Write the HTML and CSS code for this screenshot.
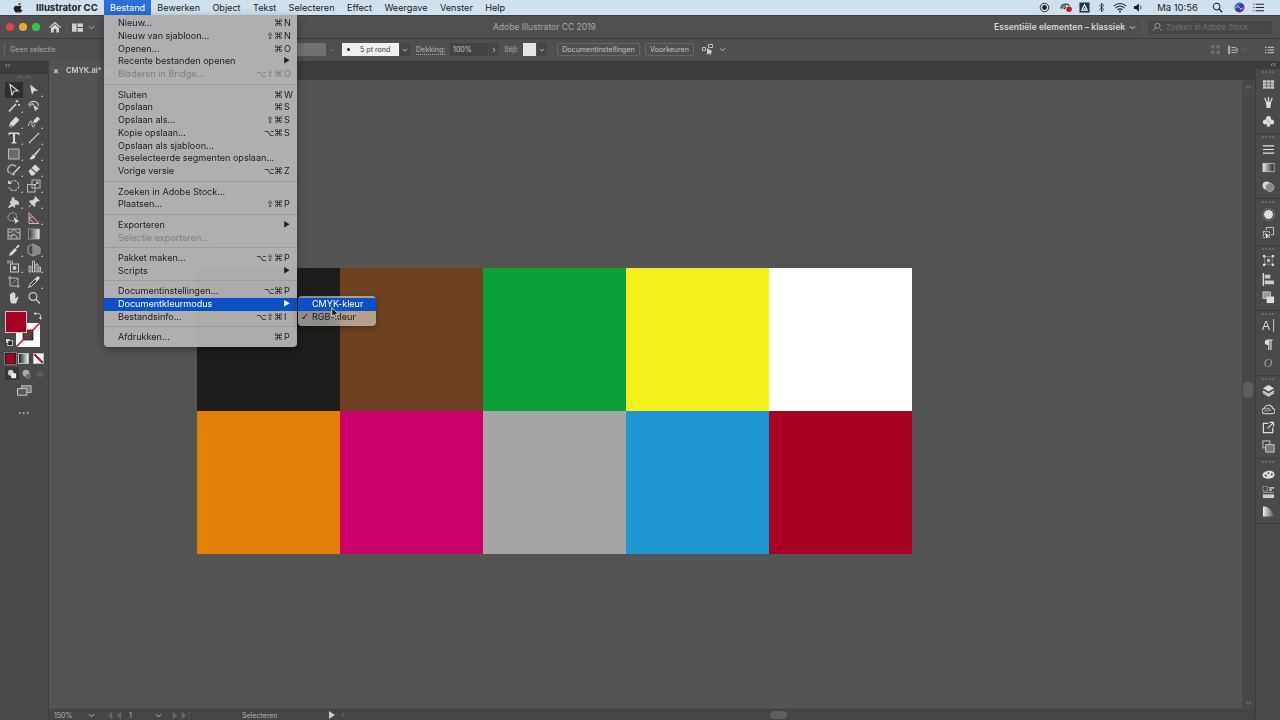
FILE: index.html
```html
<!DOCTYPE html>
<html lang="nl">
<head>
    <meta charset="UTF-8">
    <title>Adobe Illustrator CC 2019</title>
    <link rel="stylesheet" href="styles.css">
</head>
<body>
<div class="app">

    <!-- macOS menu bar -->
    <div class="menubar">
        <svg class="apple" viewBox="0 0 16 16"><path d="M11.2 1c.1 1-.3 1.900-.9 2.600-.6.700-1.500 1.200-2.400 1.100-.1-.9.300-1.900.9-2.500C9.400 1.500 10.400 1.100 11.200 1zM13.800 11.500c-.4.900-.6 1.300-1.100 2-.7 1-1.500 2-2.600 2-1 0-1.200-.6-2.500-.6s-1.600.6-2.500.6c-1.100 0-1.900-1-2.600-2C1 11.200.8 8.400 1.700 7c.7-1 1.700-1.600 2.800-1.600s1.800.6 2.700.6 1.400-.6 2.700-.6c1 0 2 .5 2.700 1.400-2.400 1.300-2 4.800 1.200 4.700z"/></svg>
        <span class="app-name">Illustrator CC</span>
        <span class="menu-item open">Bestand</span>
        <span class="menu-item">Bewerken</span>
        <span class="menu-item">Object</span>
        <span class="menu-item">Tekst</span>
        <span class="menu-item">Selecteren</span>
        <span class="menu-item">Effect</span>
        <span class="menu-item">Weergave</span>
        <span class="menu-item">Venster</span>
        <span class="menu-item">Help</span>
        <div class="status-icons">
            <svg viewBox="0 0 12 12"><circle cx="6" cy="6" r="4.700" fill="none" stroke="#222" stroke-width="1"/><circle cx="6" cy="6" r="2.600" fill="#222"/></svg>
            <svg class="wide st-cloud" viewBox="0 0 16 12"><path d="M2 7c0-3 3-5 6-5 1.500 0 3 .6 4 2M4 7.500c0-2 2-3.500 4-3.500M6 8c0-1 1-2 2-2" fill="none" stroke="#222" stroke-width="1.300"/><circle cx="11.500" cy="8" r="3.200" fill="#c4121a"/></svg>
            <svg viewBox="0 0 12 12"><rect x=".5" y=".5" width="11" height="11" fill="#1d3350"/><path d="M3 9l3-6 3 6zM5 7.500h2" fill="none" stroke="#fff" stroke-width="1.200"/></svg>
            <svg viewBox="0 0 12 12"><path d="M3.500 3.200L8.500 8 6 10.800V1.200L8.500 4 3.500 8.800" fill="none" stroke="#222" stroke-width=".9"/></svg>
            <svg class="wide" viewBox="0 0 16 12"><path d="M1 4.500c4-4 10-4 14 0M3 6.700c3-2.800 7-2.800 10 0M5.200 8.800c1.600-1.400 4-1.400 5.600 0" fill="none" stroke="#222" stroke-width="1.200"/><circle cx="8" cy="10.500" r="1.100" fill="#222"/></svg>
            <svg viewBox="0 0 12 12"><path d="M1 4.300h2.200L6.500 1.500v9L3.200 7.700H1z" fill="#222"/><path d="M8 4c.8.800.8 3.200 0 4" fill="none" stroke="#222"/></svg>
            <span class="clock">Ma 10:56</span>
            <svg class="st-search" viewBox="0 0 12 12"><circle cx="5" cy="5" r="3.600" fill="none" stroke="#222" stroke-width="1.100"/><path d="M7.600 7.600l3.600 3.600" stroke="#222" stroke-width="1.300"/></svg>
            <svg class="st-siri" viewBox="0 0 12 12"><defs><linearGradient id="siri" x1="0" y1="0" x2="1" y2="1"><stop offset="0" stop-color="#41a5e8"/><stop offset=".55" stop-color="#3a2f9a"/><stop offset="1" stop-color="#c0396e"/></linearGradient></defs><circle cx="6" cy="6" r="5.500" fill="url(#siri)"/><path d="M2 6.500c1.500-2.500 2.500-2 4 0s2.500 1 4-.5" fill="none" stroke="#dfe8ff" stroke-width="1"/></svg>
            <svg class="st-list" viewBox="0 0 12 12"><path d="M3 2.500h9M3 6h9M3 9.500h9" stroke="#222" stroke-width="1.100"/><path d="M.5 2.500h1M.5 6h1M.5 9.500h1" stroke="#222" stroke-width="1.200"/></svg>
        </div>
    </div>

    <!-- Illustrator title bar -->
    <div class="titlebar">
        <span class="light red"></span>
        <span class="light yellow"></span>
        <span class="light green"></span>
        <svg class="home" viewBox="0 0 12 12"><path d="M0 6.200L6 .8l6 5.400-.8.800L6 2.400.8 7zM2 7l4-3.500L10 7v4.500H7.300V8H4.700v3.500H2z" fill="#d4d4d4"/></svg>
        <span class="divider"></span>
        <svg class="layout" viewBox="0 0 12 9"><path d="M0 0h5v9H0zM6 0h6v4H6zM6 5h6v4H6z" fill="#cfcfcf"/></svg>
        <svg class="chev" viewBox="0 0 8 5"><path d="M1 1l3 3 3-3" fill="none" stroke="#bbb" stroke-width="1.100"/></svg>
        <span class="doc-title">Adobe Illustrator CC 2019</span>
        <span class="workspace">Essentiële elementen – klassiek</span>
        <svg class="chev" viewBox="0 0 8 5"><path d="M1 1l3 3 3-3" fill="none" stroke="#ddd" stroke-width="1.100"/></svg>
        <span class="divider right"></span>
        <div class="stock-search">
            <svg viewBox="0 0 14 12"><circle cx="7" cy="4.500" r="3.300" fill="none" stroke="#aaa"/><path d="M4.600 7L1.500 10.500" stroke="#aaa" stroke-width="1.200"/><path d="M10 9h3l-1.500 1.500z" fill="#aaa"/></svg>
            <span>Zoeken in Adobe Stock</span>
        </div>
    </div>

    <!-- control bar -->
    <div class="controlbar">
        <span class="grip"></span>
        <span class="no-selection">Geen selectie</span>
        <span class="stroke-field"></span>
        <span class="chev-box dim"><svg viewBox="0 0 8 5"><path d="M1 1l3 3 3-3" fill="none" stroke="#777" stroke-width="1.100"/></svg></span>
        <span class="brush-field"><i class="brush-dot"></i>5 pt rond</span>
        <span class="chev-box"><svg viewBox="0 0 8 5"><path d="M1 1l3 3 3-3" fill="none" stroke="#ccc" stroke-width="1.100"/></svg></span>
        <span class="ctl-label link">Dekking:</span>
        <span class="opacity-field">100%</span>
        <span class="chev-box arrow"><svg viewBox="0 0 5 8"><path d="M1 1l3 3-3 3" fill="none" stroke="#ccc" stroke-width="1.100"/></svg></span>
        <span class="ctl-label style-label">Stijl:</span>
        <span class="style-swatch"></span>
        <span class="chev-box"><svg viewBox="0 0 8 5"><path d="M1 1l3 3 3-3" fill="none" stroke="#ccc" stroke-width="1.100"/></svg></span>
        <span class="ctl-btn doc-btn">Documentinstellingen</span>
        <span class="ctl-btn pref-btn">Voorkeuren</span>
        <svg class="align-icon" viewBox="0 0 12 11"><path d="M.5 3.500h3v3h-3zM6.500.5h4v3h-4z" fill="none" stroke="#bbb"/><path d="M5 4v7l2-1.800L8.500 11 10 7z" fill="#ccc"/></svg>
        <svg class="chev" viewBox="0 0 8 5"><path d="M1 1l3 3 3-3" fill="none" stroke="#bbb" stroke-width="1.100"/></svg>
        <div class="ctl-end">
            <svg class="dots-grid" viewBox="0 0 10 10"><path d="M0 0h4v4H0zM6 0h4v4H6zM0 6h4v4H0zM6 6h4v4H6z" fill="#6c6c6c"/></svg>
            <svg class="align-end" viewBox="0 0 14 10"><path d="M0 0h2.500v10H0z" fill="#aaa"/><path d="M4 2h4a3 3 0 010 6H4M4 5h6" fill="none" stroke="#bbb" stroke-width="1.100"/></svg>
            <svg class="chev" viewBox="0 0 8 5"><path d="M1 1l3 3 3-3" fill="none" stroke="#6c6c6c" stroke-width="1.100"/></svg>
            <svg class="list-icon" viewBox="0 0 10 8"><path d="M3 1h7M3 4h7M3 7h7" stroke="#ccc" stroke-width="1.100"/><path d="M0 1h1.500M0 4h1.500M0 7h1.500" stroke="#ccc" stroke-width="1.300"/></svg>
        </div>
    </div>

    <div class="workspace-area">

        <!-- tools -->
        <aside class="toolbar">
            <div class="panel-head">‹‹</div>
            <div class="panel-grip"></div>
            <div class="tools">
                <span class="tool selected"><svg viewBox="0 0 14 14"><path d="M3 1.500l8 6.200-4 .3-2 4z" fill="none" stroke="#ddd" stroke-width="1.100"/></svg></span>
                <span class="tool more"><svg viewBox="0 0 14 14"><path d="M3 1.500l8 6.200-4 .3-2 4z" fill="#d8d8d8"/></svg></span>
                <span class="tool more"><svg viewBox="0 0 14 14"><path d="M2 12.500L9 5" stroke="#ddd" stroke-width="1.500"/><path d="M10 1v2.500M8.500 2.300h3M12 5v2M11 6h2" stroke="#ddd"/></svg></span>
                <span class="tool"><svg viewBox="0 0 14 14"><path d="M1.500 6C2 3 6 1.500 9 3c2 1 2.500 3 1.800 4.500M3 8C2 5.500 5 4 7 5.500" fill="none" stroke="#ccc" stroke-width="1.100"/><path d="M6 5.500l6 4.500-2.500.2-1 2.300z" fill="#ddd"/></svg></span>
                <span class="tool more"><svg viewBox="0 0 14 14"><path d="M2 13l1-5 4.500-5L11 6.500 6.500 11zM7.500 3L9 1.500 12.500 5 11 6.500" fill="#d8d8d8"/><path d="M2 13l3-3" stroke="#444"/></svg></span>
                <span class="tool more"><svg viewBox="0 0 14 14"><path d="M1 11c2-3 1-5 3-5s0 6 2 6c1.500 0 1-2 2-3" fill="none" stroke="#ccc"/><path d="M6 8l1-3 3.500-3.500L13 4 9.500 7.500z" fill="#d8d8d8"/></svg></span>
                <span class="tool more"><svg viewBox="0 0 14 14"><path d="M1.500 1.500h11v2.800h-1L11 3H8v8l1.500.5v1h-5v-1L6 11V3H3l-.5 1.300h-1z" fill="#d8d8d8"/></svg></span>
                <span class="tool more"><svg viewBox="0 0 14 14"><path d="M2 12L12 2" stroke="#ccc" stroke-width="1.100"/></svg></span>
                <span class="tool more"><svg viewBox="0 0 14 14"><rect x="1.500" y="2" width="10.500" height="10" fill="#6a6a6a" stroke="#bbb" stroke-width="1"/></svg></span>
                <span class="tool more"><svg viewBox="0 0 14 14"><path d="M13 1L7 7l1.500 1.500L13.500 2zM6.500 7.500C4 8 5 10.500 2 12c3 1 6 0 6.500-3z" fill="#d8d8d8"/></svg></span>
                <span class="tool more"><svg viewBox="0 0 14 14"><path d="M9 3.500A4.500 4.500 0 102 10" fill="none" stroke="#bbb" stroke-width="1.300"/><path d="M5 11l7.500-8 1 1L6 12z" fill="#d8d8d8"/><path d="M3 8.500c0 3 3 4 5 3" fill="none" stroke="#bbb"/></svg></span>
                <span class="tool more"><svg viewBox="0 0 14 14"><path d="M1.500 8L8 1.500 13 6l-6.500 6.500H4z" fill="#d8d8d8"/><path d="M4 5.500L9.500 10" stroke="#555" stroke-width="1.200"/></svg></span>
                <span class="tool more"><svg viewBox="0 0 14 14"><path d="M3 3.500A5 5 0 112 8" fill="none" stroke="#aaa" stroke-width="1.300" stroke-dasharray="3 1"/><path d="M1 1v4h4z" fill="#ccc"/></svg></span>
                <span class="tool more"><svg viewBox="0 0 14 14"><rect x=".5" y="5.500" width="7.500" height="7.500" fill="none" stroke="#bbb"/><rect x="5" y="1" width="8" height="8" fill="none" stroke="#bbb"/><path d="M7 7l4-4M9 3h2v2" fill="none" stroke="#ddd"/></svg></span>
                <span class="tool more"><svg viewBox="0 0 14 14"><path d="M1 13c1-3 2-3 3-4-2-1-1-3 .5-3.500C4 3 6 1 7.500 2.500 6.500 4 8 5 10 5.500c2 .5 3 3 1 5-.5-1-2-1.500-3-.5.500 1 0 2-.5 3-1-1-2-2-3-1.500-.5.500-1 1-3.500 1.500z" fill="#cfcfcf"/></svg></span>
                <span class="tool more"><svg viewBox="0 0 14 14"><path d="M8 1l5 5-1.200.6-1-.6-2.600 2.600.3 2L7.300 12 4.800 9.300 2 12.500l-.6-.6L4.500 9 2 6.500l1.400-1.200 2 .3L8 3l-.6-1z" fill="#d8d8d8"/></svg></span>
                <span class="tool"><svg viewBox="0 0 14 14"><path d="M1 6c0-3 3-4.500 5.500-4 3 .5 4 3 3 5L7 10 3 9.500C2 9 1 8 1 6z" fill="none" stroke="#bbb" stroke-dasharray="2 1"/><path d="M6.500 6l6 4.500-2.700.2-1 2.500z" fill="#ddd"/></svg></span>
                <span class="tool more"><svg viewBox="0 0 14 14"><path d="M2 1.500v11h10z" fill="#7a4048"/><path d="M2 1.500v11h10zM2 7l5 5.500M2 7l4-1.500" fill="none" stroke="#bbb"/></svg></span>
                <span class="tool"><svg viewBox="0 0 14 14"><rect x="1" y="2" width="12" height="10" fill="#555" stroke="#bbb"/><path d="M1 5c3 1 5-1 6-3M1 9c4 0 5-2 7-1s2 3 2 4M7 2c1 2 3 4 6 4M4 12c0-3 1-5 3-5" fill="none" stroke="#ccc" stroke-width=".8"/></svg></span>
                <span class="tool"><svg viewBox="0 0 14 14"><defs><linearGradient id="toolgrad"><stop offset="0" stop-color="#333"/><stop offset="1" stop-color="#eee"/></linearGradient></defs><rect x="1.500" y="2" width="11" height="10" fill="url(#toolgrad)" stroke="#aaa" stroke-width=".7"/></svg></span>
                <span class="tool more"><svg viewBox="0 0 14 14"><path d="M2 13l1-3 5-5 2 2-5 5zM8.500 4.500L11 2c1-.8 2 .2 1.300 1.300L10 5.500z" fill="#d8d8d8"/></svg></span>
                <span class="tool more"><svg viewBox="0 0 14 14"><path d="M1 3.500L6 1l7 3.500v6L6 13l-5-3z" fill="none" stroke="#aaa"/><path d="M6 1v12" stroke="#aaa"/><path d="M6 1l7 3.500v6L6 13z" fill="#888"/></svg></span>
                <span class="tool more"><svg viewBox="0 0 14 14"><path d="M1 1.500v3M3 1.500v3M5 1.500l.5 3" stroke="#ccc"/><rect x="3.500" y="5" width="8" height="8" fill="none" stroke="#ccc"/><circle cx="7.500" cy="9" r="2" fill="#ccc"/></svg></span>
                <span class="tool more"><svg viewBox="0 0 14 14"><path d="M2 13V7h2v6zM5.500 13V2h2v11zM9 13V5h2v8zM12 13V8h1.500v5z" fill="none" stroke="#ccc" stroke-width=".9"/></svg></span>
                <span class="tool"><svg viewBox="0 0 14 14"><path d="M3 1v10h10" fill="none" stroke="#bbb"/><path d="M1 3h10v10" fill="none" stroke="#bbb"/><path d="M5 9l5-5" stroke="#888"/></svg></span>
                <span class="tool more"><svg viewBox="0 0 14 14"><path d="M1.500 12.500L3 9l5-5 2 2-5 5z" fill="none" stroke="#ccc"/><path d="M8 3.500L11 1l2 2-2.500 3z" fill="#d8d8d8"/></svg></span>
                <span class="tool"><svg viewBox="0 0 14 14"><path d="M3 7V3.500c0-1 1.300-1 1.300 0V6.500V2.200c0-1 1.400-1 1.400 0v4.300V1.800c0-1 1.400-1 1.400 0v4.700-3.800c0-1 1.300-1 1.300 0V8l1.500-1.800c1-.8 1.800 0 1.200 1L9 12.500H4.500C3.500 11.500 3 9 3 7z" fill="#d8d8d8"/></svg></span>
                <span class="tool"><svg viewBox="0 0 14 14"><circle cx="6" cy="5.500" r="3.900" fill="none" stroke="#ccc" stroke-width="1.200"/><path d="M9 8.500l4 4" stroke="#ccc" stroke-width="1.500"/></svg></span>
            </div>

            <div class="fill-stroke">
                <svg class="stroke-swatch" viewBox="0 0 24 24"><rect width="24" height="24" fill="#fff"/><rect x="7" y="7" width="10" height="10" fill="#444" stroke="#111" stroke-width=".7"/><path d="M0 24L24 0" stroke="#c8102e" stroke-width="1.500"/></svg>
                <span class="fill-swatch"></span>
                <svg class="swap" viewBox="0 0 12 12"><path d="M2 3.500h5.500c1.500 0 2.500 1 2.500 2.500v3" fill="none" stroke="#ddd" stroke-width="1.200"/><path d="M3.500 1L1 3.500 3.500 6zM7.500 8.500h5L10 11.500z" fill="#ddd"/></svg>
                <svg class="reset" viewBox="0 0 10 10"><rect x=".5" y=".5" width="6" height="6" fill="#ddd" stroke="#222"/><rect x="3.500" y="3.500" width="6" height="6" fill="#222" stroke="#ddd"/></svg>
            </div>

            <div class="mode-row">
                <span class="mode color"></span>
                <span class="mode gradient"></span>
                <span class="mode none"></span>
            </div>
            <div class="mode-row draw">
                <span class="draw-mode on"><svg viewBox="0 0 12 12"><circle cx="4.500" cy="4.500" r="3.500" fill="#ccc"/><rect x="5" y="5" width="6" height="6" rx="1" fill="#eee"/></svg></span>
                <span class="draw-mode"><svg viewBox="0 0 12 12"><circle cx="6" cy="5" r="4" fill="#aaa"/><rect x="6" y="6" width="5" height="5" rx="1" fill="#666" stroke="#aaa" stroke-width=".6"/></svg></span>
                <span class="draw-mode"><svg viewBox="0 0 12 12"><circle cx="6" cy="6" r="4" fill="#5c5c5c"/></svg></span>
            </div>
            <svg class="screen-mode" viewBox="0 0 16 11"><rect x="5" y=".5" width="10" height="7" fill="#777" stroke="#ccc"/><rect x=".5" y="3.500" width="10" height="7" fill="#5b5b5b" stroke="#ccc"/></svg>
            <div class="more-tools">•••</div>
        </aside>

        <main class="doc-area">
            <div class="tabs">
                <div class="tab"><span class="tab-x">×</span><span class="tab-name">CMYK.ai* @</span></div>
            </div>
            <div class="canvas-row">
                <div class="canvas">
                    <div class="artboard">
                        <span class="black"></span>
                        <span class="brown"></span>
                        <span class="green"></span>
                        <span class="yellow"></span>
                        <span class="white"></span>
                        <span class="orange"></span>
                        <span class="magenta"></span>
                        <span class="grey"></span>
                        <span class="blue"></span>
                        <span class="crimson"></span>
                    </div>
                </div>
                <div class="v-scroll">
                    <svg viewBox="0 0 8 5"><path d="M1 4l3-3 3 3" fill="none" stroke="#888"/></svg>
                    <span class="v-thumb"></span>
                    <svg viewBox="0 0 8 5"><path d="M1 1l3 3 3-3" fill="none" stroke="#888"/></svg>
                </div>
            </div>
            <div class="statusbar">
                <span class="zoom-val">150%</span>
                <svg class="chev" viewBox="0 0 8 5"><path d="M1 1l3 3 3-3" fill="none" stroke="#bbb" stroke-width="1.100"/></svg>
                <svg class="pager" viewBox="0 0 20 7"><path d="M1 0v7M7 0L3 3.500 7 7zM16 0l-4 3.500L16 7z" fill="#646464" stroke="#646464" stroke-width=".6"/></svg>
                <span class="page-val">1</span>
                <svg class="chev" viewBox="0 0 8 5"><path d="M1 1l3 3 3-3" fill="none" stroke="#bbb" stroke-width="1.100"/></svg>
                <svg class="pager next" viewBox="0 0 20 7"><path d="M2 0l4 3.500L2 7zM11 0l4 3.500L11 7zM18 0v7" fill="#646464" stroke="#646464" stroke-width=".6"/></svg>
                <span class="status-tool">Selecteren</span>
                <svg class="status-play" viewBox="0 0 6 8"><path d="M0 0l6 4-6 4z" fill="#ccc"/></svg>
                <svg class="status-left" viewBox="0 0 5 8"><path d="M4 1L1 4l3 3" fill="none" stroke="#888"/></svg>
                <span class="h-thumb"></span>
            </div>
        </main>

        <!-- docked panels -->
        <aside class="panels">
            <div class="panel-head right">‹‹</div>
            <div class="dock">
                <div class="panel-grip"></div>
                <svg viewBox="0 0 14 14"><rect x="1" y="2.500" width="12" height="9" fill="#ccc"/><path d="M1 5.500h12M1 8.500h12M5 2.500v9M9 2.500v9" stroke="#555" stroke-width=".8"/></svg>
                <svg viewBox="0 0 14 14"><path d="M4 6l1 7h4l1-7z" fill="#ddd"/><path d="M7 6V1M4.500 6L3 2M9.500 6L11 2" stroke="#ddd" stroke-width="1.400"/></svg>
                <svg viewBox="0 0 14 14"><circle cx="7" cy="3.700" r="2.700" fill="#ddd"/><circle cx="3.700" cy="7.500" r="2.700" fill="#ddd"/><circle cx="10.300" cy="7.500" r="2.700" fill="#ddd"/><path d="M6 7h2l1 5.500H5z" fill="#ddd"/></svg>
            </div>
            <div class="dock">
                <div class="panel-grip"></div>
                <svg viewBox="0 0 14 14"><path d="M1 3h12M1 7h12M1 11h12" stroke="#ddd" stroke-width="1.300"/></svg>
                <svg viewBox="0 0 14 14"><defs><linearGradient id="panelgrad"><stop offset="0" stop-color="#eee"/><stop offset="1" stop-color="#222"/></linearGradient></defs><rect x="1" y="2.500" width="12" height="9" fill="url(#panelgrad)" stroke="#ccc" stroke-width=".8"/></svg>
                <svg viewBox="0 0 14 14"><circle cx="5" cy="6" r="4.500" fill="#d8d8d8"/><circle cx="8.500" cy="8" r="4.500" fill="#888" stroke="#aaa" stroke-width=".8"/></svg>
            </div>
            <div class="dock">
                <div class="panel-grip"></div>
                <svg viewBox="0 0 14 14"><circle cx="7" cy="7" r="4.800" fill="#ddd"/><circle cx="7" cy="7" r="6.300" fill="none" stroke="#bbb" stroke-dasharray="1 1.200"/></svg>
                <svg viewBox="0 0 14 14"><path d="M4.500 4.500v-3h8v8h-3" fill="none" stroke="#ccc"/><rect x="1.500" y="6" width="6.500" height="6.500" fill="none" stroke="#ddd" stroke-dasharray="2 1"/><path d="M3 7l5 4-2.300.2-.8 2z" fill="#eee"/></svg>
            </div>
            <div class="dock">
                <div class="panel-grip"></div>
                <svg viewBox="0 0 14 14"><rect x="3" y="3" width="8" height="8" fill="none" stroke="#bbb" stroke-dasharray="1.500 1"/><path d="M1 1h2.500v2.500H1zM10.500 1H13v2.500h-2.500zM1 10.500h2.500V13H1zM10.500 10.500H13V13h-2.500z" fill="#ddd"/><path d="M5.500 5.500h3v3h-3z" fill="#ccc"/></svg>
                <svg viewBox="0 0 14 14"><path d="M1.500 0v14" stroke="#ddd" stroke-width="1.500"/><path d="M3 2h6v4H3zM3 8h10v4H3z" fill="#ccc"/></svg>
                <svg viewBox="0 0 14 14"><rect x="1" y="1" width="8" height="7" fill="#999" stroke="#ddd" stroke-width=".8"/><rect x="5" y="6" width="8" height="7" fill="#ddd"/></svg>
            </div>
            <div class="dock">
                <div class="panel-grip"></div>
                <svg viewBox="0 0 14 14"><text class="panel-glyph" x="0" y="12">A</text><path d="M12.500 0v14" stroke="#ddd" stroke-width=".9"/></svg>
                <svg viewBox="0 0 14 14"><path d="M6 1.500h5.500v1.300H10.300v10H9V2.800H8v10H6.700V7.500C3.500 7.500 2.800 5.500 3 4.500c.2-2 1.500-3 3-3z" fill="#ddd"/></svg>
                <svg viewBox="0 0 14 14"><text class="panel-glyph italic" x="2" y="11.500">O</text></svg>
            </div>
            <div class="dock">
                <div class="panel-grip"></div>
                <svg viewBox="0 0 14 14"><path d="M7 1l6 3.500L7 8 1 4.500z" fill="#ddd"/><path d="M1 7.500L7 11l6-3.500M1 9.500L7 13l6-3.500" fill="none" stroke="#ddd" stroke-width="1.300"/></svg>
                <svg viewBox="0 0 14 14"><path d="M3.500 11.500C1 11.500 0 10 0 8.500 0 7 1 6 2.500 6 3 3.500 5.500 2 8 2.500c2 .4 3.300 2 3.500 3.500 1.500.3 2.500 1.500 2.500 2.800 0 1.500-1.200 2.700-3 2.700z" fill="none" stroke="#ddd" stroke-width="1.100"/><path d="M3 9c1-3 3-4 5-3M5 9.500c1-2 3-2.500 5-1.500" fill="none" stroke="#ccc"/></svg>
                <svg viewBox="0 0 14 14"><path d="M7 2.500H1.500v10h10V7" fill="none" stroke="#ddd" stroke-width="1.300"/><path d="M6 8l6-6M8 1.500h4.500V6" fill="none" stroke="#ddd" stroke-width="1.300"/></svg>
                <svg viewBox="0 0 14 14"><rect x="1" y="1" width="7.500" height="7.500" fill="none" stroke="#ccc"/><rect x="4" y="5" width="9" height="8" fill="#777" stroke="#ccc"/></svg>
            </div>
            <div class="dock">
                <div class="panel-grip"></div>
                <svg viewBox="0 0 14 14"><path d="M6.500 3C10 2.500 13.500 4 13.500 7S10 11.500 7 11.500 .5 10.500.5 8C.5 5.500 3.500 3.500 6.500 3z" fill="#ddd"/><circle cx="4" cy="8" r="1.100" fill="#444"/><circle cx="7" cy="5.500" r="1" fill="#444"/><circle cx="10.500" cy="7" r="1" fill="#444"/></svg>
                <svg viewBox="0 0 14 14"><rect x="1" y=".5" width="5" height="5" fill="none" stroke="#ccc" stroke-dasharray="1 1"/><path d="M8 1h2.500v2H8zM11 1h2v2h-2zM8 3.500h2.500v2H8z" fill="#ccc"/><path d="M1 9h12v4H1z" fill="#ccc"/><path d="M1 7h12" stroke="#999"/></svg>
                <svg viewBox="0 0 14 14"><defs><linearGradient id="gloss"><stop offset="0" stop-color="#eee"/><stop offset="1" stop-color="#555"/></linearGradient></defs><path d="M1 1.500h2.500C8 2.500 11.500 7 13 12.500H1z" fill="url(#gloss)"/></svg>
            </div>
        </aside>
    </div>

    <!-- open Bestand menu -->
    <div class="file-menu">
        <div class="row">Nieuw...<span class="mods">⌘</span><span class="key">N</span></div>
        <div class="row">Nieuw van sjabloon...<span class="mods">⇧⌘</span><span class="key">N</span></div>
        <div class="row">Openen...<span class="mods">⌘</span><span class="key">O</span></div>
        <div class="row">Recente bestanden openen<span class="sub">▶</span></div>
        <div class="row off">Bladeren in Bridge...<span class="mods">⌥⇧⌘</span><span class="key">O</span></div>
        <div class="sep"></div>
        <div class="row">Sluiten<span class="mods">⌘</span><span class="key">W</span></div>
        <div class="row">Opslaan<span class="mods">⌘</span><span class="key">S</span></div>
        <div class="row">Opslaan als...<span class="mods">⇧⌘</span><span class="key">S</span></div>
        <div class="row">Kopie opslaan...<span class="mods">⌥⌘</span><span class="key">S</span></div>
        <div class="row">Opslaan als sjabloon...</div>
        <div class="row">Geselecteerde segmenten opslaan...</div>
        <div class="row">Vorige versie<span class="mods">⌥⌘</span><span class="key">Z</span></div>
        <div class="sep"></div>
        <div class="row">Zoeken in Adobe Stock...</div>
        <div class="row">Plaatsen...<span class="mods">⇧⌘</span><span class="key">P</span></div>
        <div class="sep"></div>
        <div class="row">Exporteren<span class="sub">▶</span></div>
        <div class="row off">Selectie exporteren...</div>
        <div class="sep"></div>
        <div class="row">Pakket maken...<span class="mods">⌥⇧⌘</span><span class="key">P</span></div>
        <div class="row">Scripts<span class="sub">▶</span></div>
        <div class="sep"></div>
        <div class="row">Documentinstellingen...<span class="mods">⌥⌘</span><span class="key">P</span></div>
        <div class="row active">Documentkleurmodus<span class="sub">▶</span></div>
        <div class="row">Bestandsinfo...<span class="mods">⌥⇧⌘</span><span class="key">I</span></div>
        <div class="sep"></div>
        <div class="row">Afdrukken...<span class="mods">⌘</span><span class="key">P</span></div>
    </div>

    <div class="color-menu">
        <div class="row active">CMYK-kleur</div>
        <div class="row"><span class="check">✓</span>RGB-kleur</div>
    </div>

    <svg class="cursor" viewBox="0 0 12 16"><path d="M1 1v12l3-2.800L6.200 15l2-.9L6 9.600h4z" fill="#111" stroke="#fff" stroke-width="1"/></svg>
</div>
</body>
</html>
```

FILE: styles.css
```css
* {
    margin: 0;
    padding: 0;
    box-sizing: border-box;
}

html, body {
    width: 1280px;
    height: 720px;
    overflow: hidden;
}

body {
    background: #545454;
    font-family: "Inter", "Liberation Sans", "DejaVu Sans", sans-serif;
}

svg {
    display: block;
    flex: none;
}

.app {
    position: relative;
    width: 1280px;
    height: 720px;
    display: flex;
    flex-direction: column;
    filter: blur(0.35px);
}

/* menu bar */
.menubar {
    height: 15px;
    flex: none;
    display: flex;
    align-items: center;
    padding-left: 13px;
    background: #cfe1ef;
    color: #222;
    font-size: 9.100px;
}

.apple {
    width: 11px;
    height: 11px;
    fill: #222;
    margin-right: 12px;
}

.app-name {
    font-size: 9.600px;
    font-weight: 700;
    width: 68px;
}

.menu-item {
    height: 15px;
    line-height: 15px;
    padding: 0 6.200px;
}

.menu-item.open {
    background: #2a6fdb;
    color: #fff;
    padding: 0 6px;
}

.status-icons {
    margin-left: auto;
    display: flex;
    align-items: center;
    padding-right: 16px;
}

.status-icons svg {
    width: 11px;
    height: 11px;
    margin-left: 6px;
}

.status-icons svg.wide {
    width: 14px;
}

.status-icons svg.st-cloud {
    margin-left: 9.500px;
}

.clock {
    margin: 0 14px 0 13px;
    font-size: 9.500px;
}

.status-icons svg.st-search {
    margin-left: 0;
}

.status-icons svg.st-siri {
    margin-left: 11px;
}

.status-icons svg.st-list {
    margin-left: 8px;
}

/* title bar */
.titlebar {
    height: 23px;
    flex: none;
    display: flex;
    align-items: center;
    background: #505050;
    border-top: 1px solid #3f3f3f;
    padding-left: 6px;
    font-size: 8.500px;
}

.light {
    width: 8px;
    height: 8px;
    border-radius: 50%;
    margin-right: 5px;
}

.light.red { background: #e8424a; }
.light.yellow { background: #eda92b; }
.light.green { background: #3fc24a; }

.home {
    width: 12px;
    height: 12px;
    margin-left: 4px;
}

.divider {
    width: 1px;
    height: 14px;
    background: #5e5e5e;
    margin: 0 5px;
}

.layout {
    width: 11px;
    height: 9px;
}

.chev {
    width: 7px;
    height: 5px;
    margin-left: 5px;
}

.doc-title {
    margin-left: 398px;
    width: 102px;
    color: #a9a9a9;
    white-space: nowrap;
}

.workspace {
    margin-left: 399px;
    color: #d8d8d8;
    font-weight: 600;
    letter-spacing: 0.05px;
    white-space: nowrap;
    width: 130px;
}

.divider.right {
    margin: 0 5px 0 6px;
}

.stock-search {
    width: 124px;
    height: 13px;
    display: flex;
    align-items: center;
    gap: 3px;
    padding-left: 3px;
    background: #474747;
    border: 1px solid #444;
    color: #757575;
    font-size: 7.500px;
    white-space: nowrap;
}

.stock-search svg {
    width: 11px;
    height: 10px;
}

/* control bar */
.controlbar {
    height: 23px;
    flex: none;
    display: flex;
    align-items: center;
    background: #4f4f4f;
    border-top: 1px solid #3c3c3c;
    padding: 0 0 1px 4px;
    font-size: 7.100px;
    color: #c4c4c4;
}

.grip {
    width: 2px;
    height: 13px;
    border-left: 1px dotted #777;
}

.no-selection {
    margin-left: 4px;
    width: 287px;
    color: #a8a8a8;
}

.stroke-field {
    width: 29px;
    height: 13px;
    background: #717171;
}

.chev-box {
    width: 10px;
    height: 13px;
    margin-left: 1px;
    display: flex;
    align-items: center;
    justify-content: center;
    background: #464646;
}

.chev-box svg {
    width: 6px;
    height: 4px;
}

.chev-box.dim {
    background: none;
}

.chev-box.arrow svg {
    width: 4px;
    height: 6px;
}

.brush-field {
    width: 57px;
    height: 13px;
    margin-left: 5px;
    background: #f0f0f0;
    color: #333;
    display: flex;
    align-items: center;
    padding-left: 5px;
    gap: 10px;
}

.brush-dot {
    width: 3px;
    height: 3px;
    background: #111;
    border-radius: 50%;
}

.ctl-label {
    margin-left: 6px;
    width: 29px;
    color: #b4b4b4;
    white-space: nowrap;
}

.ctl-label.link {
    border-bottom: 1px dotted #aaa;
}

.ctl-label.style-label {
    margin-left: 5px;
    width: 14px;
}

.opacity-field {
    width: 38px;
    height: 13px;
    line-height: 13px;
    margin-left: 5px;
    padding-left: 3px;
    background: #434343;
}

.style-swatch {
    width: 13px;
    height: 13px;
    margin-left: 5px;
    background: #e6e6e6;
}

.ctl-btn {
    height: 13px;
    line-height: 11px;
    border: 1px solid #666;
    border-radius: 2px;
    text-align: center;
    white-space: nowrap;
}

.doc-btn {
    width: 83px;
    margin-left: 10px;
}

.pref-btn {
    width: 49px;
    margin-left: 5px;
}

.align-icon {
    width: 12px;
    height: 11px;
    margin-left: 8px;
}

.ctl-end {
    margin-left: auto;
    display: flex;
    align-items: center;
    padding-right: 6px;
}

.ctl-end .chev {
    margin-left: 1px;
}

.dots-grid {
    width: 9px;
    height: 9px;
}

.align-end {
    width: 12px;
    height: 10px;
    margin-left: 8px;
}

.list-icon {
    width: 9px;
    height: 8px;
    margin-left: 17px;
}

/* working area */
.workspace-area {
    flex: 1;
    min-height: 0;
    display: flex;
}

.panel-head {
    height: 13px;
    padding-left: 5px;
    background: #3c3c3c;
    color: #aaa;
    font-size: 7px;
    line-height: 10px;
}

.panel-head.right {
    height: 8px;
    line-height: 8px;
    text-align: right;
    padding-right: 4px;
}

.panel-grip {
    width: 12px;
    height: 6.500px;
    margin: 2px auto 0;
    border-top: 2px dotted #666;
}

.toolbar {
    width: 49px;
    flex: none;
    background: #4a4a4a;
    border-right: 1px solid #3d3d3d;
}

.tools {
    display: grid;
    grid-template-columns: 20px 20px;
    grid-auto-rows: 16px;
    padding-left: 4px;
    margin-top: -0.500px;
}

.tool {
    position: relative;
    display: flex;
    align-items: center;
    justify-content: center;
}

.tool svg {
    width: 14px;
    height: 14px;
}

.tool.selected {
    background: #2f2f2f;
    margin: 0 1px;
}

.tool.more::after {
    content: "";
    position: absolute;
    right: 1px;
    bottom: 1px;
    border-left: 2px solid transparent;
    border-bottom: 2px solid #bbb;
}

.fill-stroke {
    position: relative;
    height: 37px;
    margin: 5px 0 0 5px;
}

.fill-swatch {
    position: absolute;
    left: 0;
    top: 0;
    width: 22px;
    height: 22px;
    background: #a60022;
    border: 1px solid #c9c2c2;
}

.stroke-swatch {
    position: absolute;
    left: 11px;
    top: 12px;
    width: 24px;
    height: 24px;
}

.swap {
    position: absolute;
    left: 28px;
    top: 0;
    width: 9px;
    height: 9px;
}

.reset {
    position: absolute;
    left: 0;
    top: 27px;
    width: 8px;
    height: 8px;
}

.mode-row {
    display: flex;
    gap: 2px;
    margin: 5px 0 0 5px;
}

.mode {
    width: 11px;
    height: 11px;
    border: 1px solid #bbb;
}

.mode.color { background: #a60022; border-color: #222; outline: 1px solid #777; }
.mode.gradient { background: linear-gradient(to right, #222, #eee); }
.mode.none {
    margin-left: 2px;
    background: linear-gradient(to top right, #fff 42%, #d01030 42%, #d01030 58%, #fff 58%);
}

.mode-row.draw {
    margin-top: 3px;
    gap: 0;
}

.draw-mode {
    width: 14px;
    height: 13px;
    display: flex;
    align-items: center;
    justify-content: center;
}

.draw-mode svg {
    width: 10px;
    height: 10px;
}

.draw-mode.on {
    background: #363636;
}

.screen-mode {
    width: 15px;
    height: 11px;
    margin: 5px 0 0 17px;
}

.more-tools {
    margin-top: 13px;
    text-align: center;
    color: #bbb;
    font-size: 6px;
    letter-spacing: 0.5px;
}

/* document */
.doc-area {
    flex: 1;
    min-width: 0;
    display: flex;
    flex-direction: column;
}

.tabs {
    height: 19px;
    flex: none;
    background: #3c3c3c;
}

.tab {
    width: 248px;
    height: 19px;
    padding-left: 4px;
    display: flex;
    align-items: center;
    background: #535353;
    color: #d0d0d0;
    font-size: 7.500px;
    font-weight: 600;
    white-space: nowrap;
}

.tab-x {
    width: 13px;
    font-size: 9px;
}

.canvas-row {
    flex: 1;
    min-height: 0;
    display: flex;
}

.canvas {
    flex: 1;
    background: #545454;
    padding: 188px 0 0 148px;
}

.artboard {
    width: 715px;
    height: 286px;
    display: grid;
    grid-template-columns: repeat(5, 143px);
    grid-template-rows: repeat(2, 143px);
}

.black { background: #1d1d1b; }
.brown { background: #6e4220; }
.green { background: #0ca039; }
.yellow { background: #f6f01c; }
.white { background: #fff; }
.orange { background: #e27f06; }
.magenta { background: #cc006c; }
.grey { background: #a5a5a5; }
.blue { background: #1f97d2; }
.crimson { background: #a60022; }

.v-scroll {
    width: 13px;
    flex: none;
    background: #484848;
    display: flex;
    flex-direction: column;
    align-items: center;
    padding: 5px 0 3px;
}

.v-scroll svg {
    width: 7px;
    height: 4px;
}

.v-thumb {
    width: 10px;
    height: 16px;
    margin: 293px 1px auto 0;
    border-radius: 5px;
    background: #5e5e5e;
}

.statusbar {
    height: 12px;
    flex: none;
    display: flex;
    align-items: center;
    background: #454545;
    border-top: 1px solid #4d4d4d;
    color: #b4b4b4;
    font-size: 7px;
    padding: 1px 0 0 5px;
}

.zoom-val {
    width: 29px;
}

.pager {
    margin-left: 10px;
    width: 20px;
    height: 7px;
}

.pager.next {
    margin-left: 9px;
}

.page-val {
    margin-left: 4px;
    width: 21px;
}

.status-tool {
    margin-left: 51px;
    width: 87px;
}

.status-play {
    width: 6px;
    height: 8px;
}

.status-left {
    width: 4px;
    height: 6px;
    margin-left: 6px;
}

.h-thumb {
    width: 17px;
    height: 8px;
    margin-left: 425px;
    border-radius: 4px;
    background: #5e5e5e;
}

/* right dock */
.panels {
    width: 25px;
    flex: none;
    background: #4a4a4a;
    border-left: 1px solid #3d3d3d;
}

.dock {
    border-bottom: 1px solid #3a3a3a;
}

.dock svg {
    width: 13px;
    height: 13px;
    margin: 0 auto 5.500px;
}

.panel-glyph {
    font-family: "Liberation Sans", sans-serif;
    font-size: 13px;
    fill: #ddd;
}

.panel-glyph.italic {
    font-family: "Liberation Serif", serif;
    font-style: italic;
    font-size: 13px;
    fill: #999;
}

/* dropdown menus */
.file-menu,
.color-menu {
    position: absolute;
    color: #1c1c1c;
    font-size: 9.050px;
}

.file-menu {
    left: 104px;
    top: 15px;
    width: 193px;
    height: 332px;
    padding-top: 2.200px;
    background: rgba(180, 180, 183, 0.95);
    border-radius: 0 0 4px 4px;
    box-shadow: 0 3px 10px rgba(0, 0, 0, 0.35);
}

.row {
    height: 12.750px;
    line-height: 12.750px;
    padding: 0 3px 0 14px;
    display: flex;
    white-space: nowrap;
}

.row.off {
    color: #7e7e80;
}

.row.active {
    background: #0b50c6;
    color: #fff;
}

.mods {
    margin-left: auto;
    font-family: "DejaVu Sans", sans-serif;
    font-size: 9px;
}

.key {
    width: 10px;
    margin-left: 1px;
}

.sub {
    margin-left: auto;
    padding-right: 4px;
    font-size: 7px;
}

.sep {
    height: 7.700px;
    position: relative;
}

.sep::after {
    content: "";
    position: absolute;
    left: 0;
    right: 0;
    top: 3px;
    height: 1px;
    background: #9d9d9f;
}

.color-menu {
    left: 298px;
    top: 296px;
    width: 78px;
    height: 30px;
    padding-top: 2px;
    background: rgba(240, 236, 232, 0.55);
    backdrop-filter: blur(6px);
    border-radius: 4px;
    box-shadow: 0 2px 6px rgba(0, 0, 0, 0.3);
}

.color-menu .row {
    padding-left: 14px;
    position: relative;
}

.check {
    position: absolute;
    left: 3px;
    font-family: "DejaVu Sans", sans-serif;
    font-size: 10px;
}

.cursor {
    position: absolute;
    left: 331px;
    top: 307px;
    width: 9px;
    height: 12px;
}
```
